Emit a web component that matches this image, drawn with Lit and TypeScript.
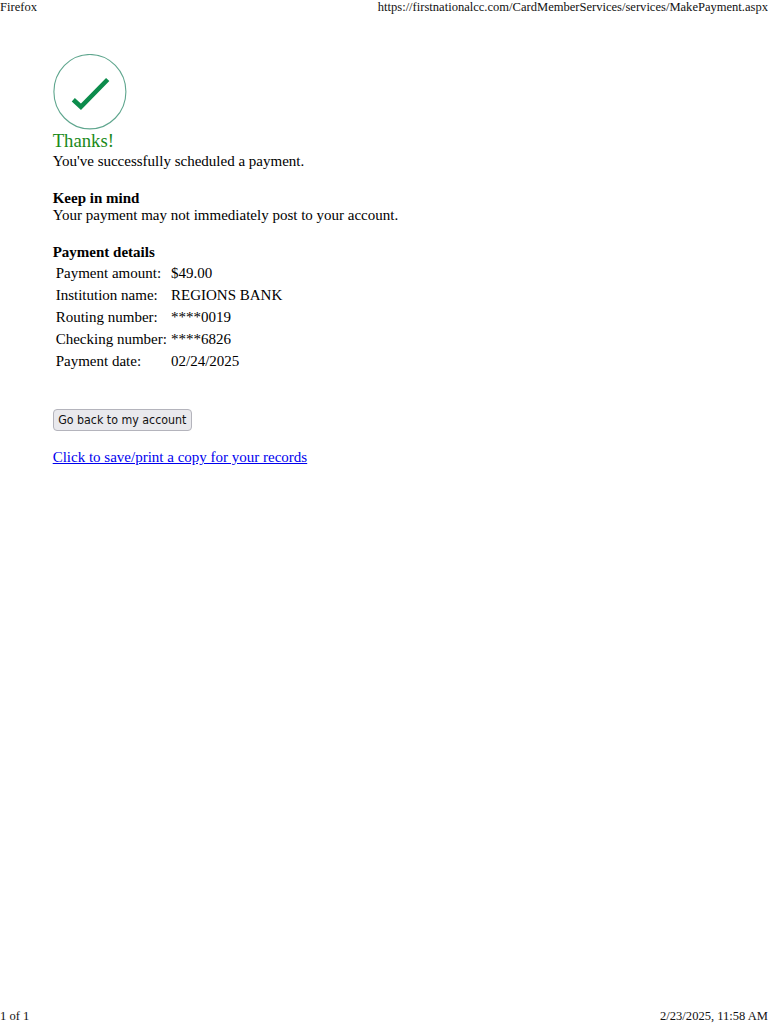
import { LitElement, html, css } from "lit";
import { customElement } from "lit/decorators.js";

const rows: [string, string][] = [
  ["Payment amount:", "$49.00"],
  ["Institution name:", "REGIONS BANK"],
  ["Routing number:", "****0019"],
  ["Checking number:", "****6826"],
  ["Payment date:", "02/24/2025"],
];

@customElement("app-root")
export class AppRoot extends LitElement {
  static styles = css`
    :host {
      display: flex;
      flex-direction: column;
      justify-content: space-between;
      height: 1024px;
      background: #fff;
      color: #000;
      font-family: "Liberation Serif", "Times New Roman", serif;
      font-size: 15px;
      overflow: hidden;
    }
    .bar {
      display: flex;
      justify-content: space-between;
      font-size: 12.56px;
      line-height: 14px;
      color: #111;
    }
    main {
      flex: 1;
      padding: 40px 0 0 52.7px;
      display: flex;
      flex-direction: column;
      align-items: flex-start;
    }
    svg { display: block; width: 76px; height: 76px; margin-bottom: 1px; }
    .thanks { color: #1a8a1a; font-size: 18.7px; line-height: 20px; }
    .line { line-height: 17px; }
    .first { margin-top: 1.5px; }
    .gap { margin-top: 20px; }
    .grid {
      display: grid;
      grid-template-columns: 115.3px auto;
      padding: 2.5px 0 0 3px;
      line-height: 17px;
    }
    .grid div { height: 21.9px; display: flex; align-items: center; white-space: nowrap; }
    button {
      margin-top: 36.5px;
      height: 22.5px;
      padding: 0 4.5px;
      border: 1px solid #b4b4bc;
      border-radius: 4px;
      background: #e9e9ed;
      color: #111;
      font-family: "DejaVu Sans Condensed", "DejaVu Sans", sans-serif;
      font-stretch: condensed;
      font-size: 12.3px;
      line-height: 20px;
    }
    a { color: #0000ee; text-decoration: underline; margin-top: 18px; line-height: 17px; }
    .foot { padding-bottom: 1px; }
  `;

  render() {
    return html`
      <div class="bar"><span>Firefox</span><span>https://firstnationalcc.com/CardMemberServices/services/MakePayment.aspx</span></div>
      <main>
        <svg viewBox="0 0 76 76" aria-hidden="true">
          <ellipse cx="36.9" cy="37.7" rx="36" ry="37.2" fill="#fff" stroke="#5fa68e" stroke-width="1.1"/>
          <path d="M20.3 45.8 L27.9 52.8 L54.7 25.5" fill="none" stroke="#0c8c4c" stroke-width="4.6" stroke-linejoin="miter"/>
        </svg>
        <div class="thanks">Thanks!</div>
        <div class="line first">You've successfully scheduled a payment.</div>
        <div class="line gap"><b>Keep in mind</b></div>
        <div class="line">Your payment may not immediately post to your account.</div>
        <div class="line gap"><b>Payment details</b></div>
        <div class="grid">
          ${rows.map(([k, v]) => html`<div>${k}</div><div>${v}</div>`)}
        </div>
        <button>Go back to my account</button>
        <a href="#">Click to save/print a copy for your records</a>
      </main>
      <div class="bar foot"><span>1 of 1</span><span>2/23/2025, 11:58 AM</span></div>
    `;
  }
}
